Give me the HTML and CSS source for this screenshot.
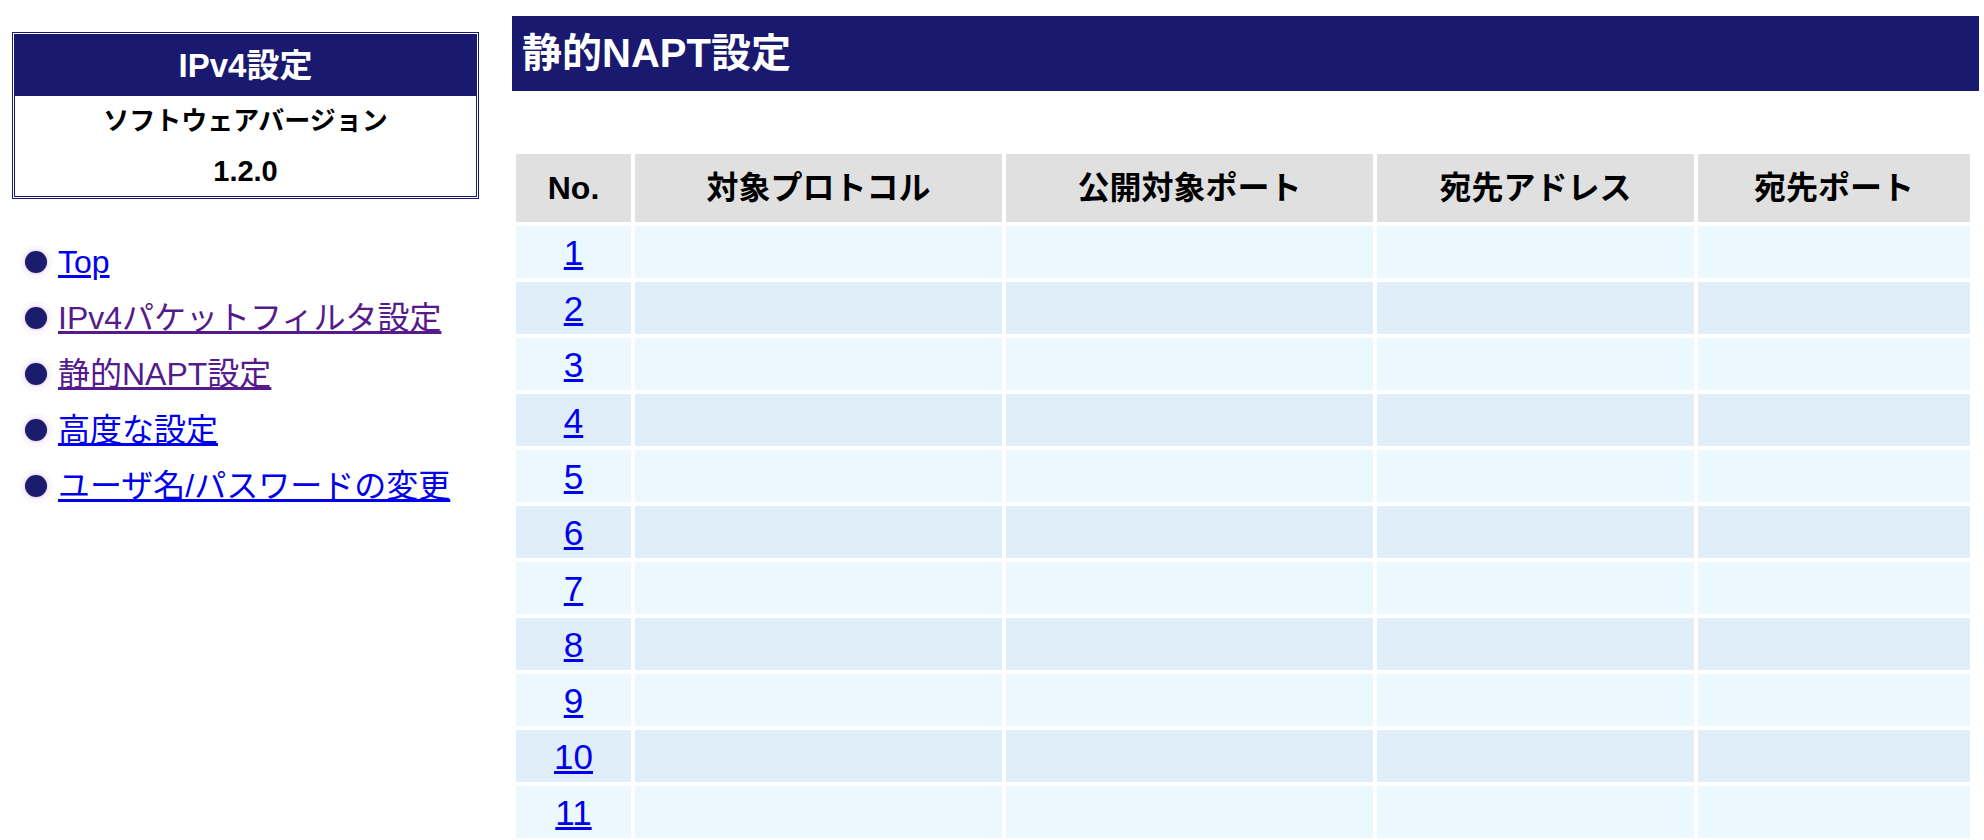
FILE: index.html
```html
<!DOCTYPE html>
<html lang="ja">
<head>
    <meta charset="utf-8">
    <title>静的NAPT設定</title>
    <link rel="stylesheet" href="styles.css">
</head>
<body>
<div class="layout">
    <div class="side">
        <div class="info">
            <div class="info-title">IPv4設定</div>
            <div class="info-row">ソフトウェアバージョン</div>
            <div class="info-row version">1.2.0</div>
        </div>
        <ul class="menu">
            <li><a href="#top">Top</a></li>
            <li><a class="seen" href="#filter">IPv4パケットフィルタ設定</a></li>
            <li><a class="seen" href="#napt">静的NAPT設定</a></li>
            <li><a href="#advanced">高度な設定</a></li>
            <li><a href="#account">ユーザ名/パスワードの変更</a></li>
        </ul>
    </div>

    <div class="content">
        <h1 class="page-title">静的NAPT設定</h1>
        <table class="napt">
            <colgroup>
                <col class="c-no">
                <col class="c-proto">
                <col class="c-port">
                <col class="c-addr">
                <col class="c-dport">
            </colgroup>
            <tr>
                <th>No.</th>
                <th>対象プロトコル</th>
                <th>公開対象ポート</th>
                <th>宛先アドレス</th>
                <th>宛先ポート</th>
            </tr>
            <tr><td><a href="#1">1</a></td><td></td><td></td><td></td><td></td></tr>
            <tr><td><a href="#2">2</a></td><td></td><td></td><td></td><td></td></tr>
            <tr><td><a href="#3">3</a></td><td></td><td></td><td></td><td></td></tr>
            <tr><td><a href="#4">4</a></td><td></td><td></td><td></td><td></td></tr>
            <tr><td><a href="#5">5</a></td><td></td><td></td><td></td><td></td></tr>
            <tr><td><a href="#6">6</a></td><td></td><td></td><td></td><td></td></tr>
            <tr><td><a href="#7">7</a></td><td></td><td></td><td></td><td></td></tr>
            <tr><td><a href="#8">8</a></td><td></td><td></td><td></td><td></td></tr>
            <tr><td><a href="#9">9</a></td><td></td><td></td><td></td><td></td></tr>
            <tr><td><a href="#10">10</a></td><td></td><td></td><td></td><td></td></tr>
            <tr><td><a href="#11">11</a></td><td></td><td></td><td></td><td></td></tr>
        </table>
    </div>
</div>
</body>
</html>
```

FILE: styles.css
```css
html,
body {
    margin: 0;
    background: #fff;
    font-family: "Liberation Sans", "Noto Sans CJK JP", sans-serif;
    color: #000;
}

a {
    color: #0000ee;
}

a.seen {
    color: #551a8b;
}

.layout {
    display: flex;
    padding: 16px 5px 0 12px;
}

/* left column */
.side {
    flex: none;
    width: 467px;
    margin-right: 33px;
    padding-top: 16px;
}

.info {
    border: 3px double #191970;
    text-align: center;
    font-weight: bold;
}

.info-title {
    height: 61px;
    line-height: 61px;
    background: #191970;
    color: #fff;
    font-size: 33px;
}

.info-row {
    height: 50px;
    line-height: 50px;
    font-size: 26px;
}

.info-row.version {
    font-size: 29px;
}

.menu {
    list-style: none;
    margin: 35px 0 0;
    padding: 0;
}

.menu li {
    display: flex;
    align-items: center;
    height: 56px;
    font-size: 32px;
    line-height: 1;
}

.menu li::before {
    content: "";
    flex: none;
    width: 22px;
    height: 22px;
    margin: 0 11px 0 13px;
    border-radius: 50%;
    background: #1c1c6c;
    box-shadow: 0 0 2px 1px #ddd6ea, 0 0 0 6px #fbf7fb;
}

/* right column */
.content {
    flex: 1;
    min-width: 0;
}

.page-title {
    margin: 0;
    height: 75px;
    line-height: 75px;
    padding-left: 10px;
    background: #191970;
    color: #fff;
    font-size: 40px;
    font-weight: bold;
}

.napt {
    margin-top: 59px;
    border-spacing: 4px;
    table-layout: fixed;
    width: 1462px;
}

.c-no { width: 115px; }
.c-proto { width: 367px; }
.c-port { width: 367px; }
.c-addr { width: 317px; }
.c-dport { width: 272px; }

.napt th,
.napt td {
    padding: 0;
    text-align: center;
    line-height: 1;
}

.napt th {
    height: 68px;
    background: #e0e0e0;
    font-size: 32px;
    font-weight: bold;
}

.napt td {
    height: 52px;
    background: #e0eef9;
    font-size: 35px;
}

.napt tr:nth-child(even) td {
    background: #ebf9fe;
}
```
